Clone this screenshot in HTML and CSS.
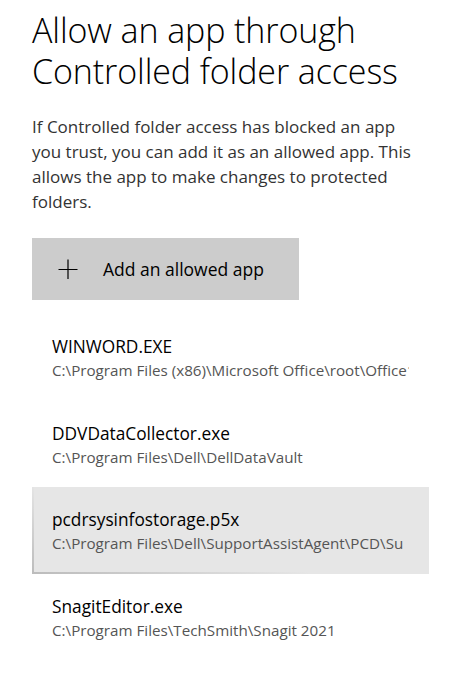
FILE: index.html
```html
<!DOCTYPE html>
<html lang="en">
<head>
<meta charset="utf-8">
<title>Allow an app through Controlled folder access</title>
<link rel="stylesheet" href="styles.css">
</head>
<body>
<main class="page">
  <h1 class="title">Allow an app through Controlled folder access</h1>
  <p class="desc">If Controlled folder access has blocked an app<br>you trust, you can add it as an allowed app. This allows the app to make changes to protected folders.</p>
  <button class="add-btn" type="button">
    <svg class="plus" width="20" height="20" viewBox="0 0 20 20" aria-hidden="true"><path d="M10 0.5V20M0.5 10.5H19.5" stroke="#000" stroke-width="1.2" fill="none"/></svg>
    <span>Add an allowed app</span>
  </button>
  <ul class="apps">
    <li class="app">
      <div class="name">WINWORD.EXE</div>
      <div class="path">C:\Program Files (x86)\Microsoft Office\root\Office16</div>
    </li>
    <li class="app">
      <div class="name">DDVDataCollector.exe</div>
      <div class="path">C:\Program Files\Dell\DellDataVault</div>
    </li>
    <li class="app hover">
      <div class="name">pcdrsysinfostorage.p5x</div>
      <div class="path">C:\Program Files\Dell\SupportAssistAgent\PCD\Su</div>
    </li>
    <li class="app">
      <div class="name">SnagitEditor.exe</div>
      <div class="path">C:\Program Files\TechSmith\Snagit 2021</div>
    </li>
  </ul>
</main>
</body>
</html>
```
FILE: styles.css
```css
html, body {
  margin: 0;
  padding: 0;
  background: #fff;
}
body {
  font-family: "Open Sans", "Noto Sans", sans-serif;
  color: #000;
}
.page {
  padding: 10px 32px 0 32px;
  width: 397px;
}
.title {
  margin: 0;
  font-weight: 300;
  font-size: 34px;
  line-height: 41px;
  letter-spacing: -0.1px;
}
.desc {
  margin: 22px 0 0 0;
  font-size: 17px;
  line-height: 25px;
  color: #333;
}
.add-btn {
  margin-top: 24px;
  width: 267px;
  height: 62px;
  border: 0;
  background: #cccccc;
  display: flex;
  align-items: center;
  padding: 0 0 0 26px;
  font-family: inherit;
  font-size: 17.5px;
  color: #000;
  gap: 25px;
  cursor: pointer;
}
.plus { flex: none; }
.apps {
  list-style: none;
  margin: 14px 0 0 0;
  padding: 0;
}
.app {
  height: 86.6px;
  box-sizing: border-box;
  padding: 21px 20px 0 20px;
  overflow: hidden;
  white-space: nowrap;
}
.app.hover {
  background:
    linear-gradient(to bottom, #e4e4e4, #bcbcbc) left top / 2px 100% no-repeat,
    linear-gradient(to right, #bcbcbc, #e6e6e6 70%) left bottom / 100% 2px no-repeat,
    #e6e6e6;
}
.name {
  font-size: 17.3px;
  line-height: 24px;
  color: #000;
}
.path {
  font-size: 15.2px;
  line-height: 22px;
  color: #555;
  overflow: hidden;
}
```
